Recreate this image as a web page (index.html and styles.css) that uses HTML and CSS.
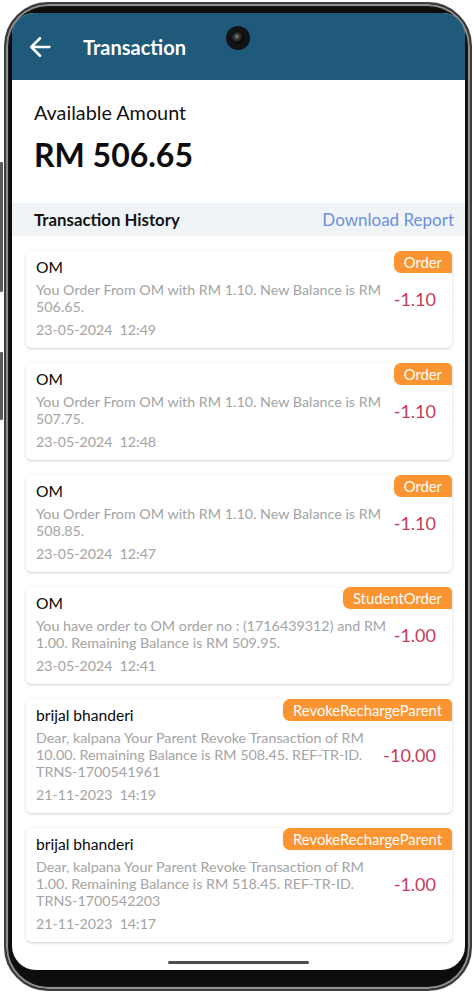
FILE: index.html
```html
<!DOCTYPE html>
<html lang="en">
<head>
<meta charset="utf-8">
<title>Transaction</title>
<link rel="stylesheet" href="styles.css">
</head>
<body>
<div class="device">
  <span class="side-btn side-btn-1"></span>
  <span class="side-btn side-btn-2"></span>
  <div class="screen">
    <header class="appbar">
      <svg class="back" viewBox="0 0 24 24" width="30" height="30" aria-hidden="true">
        <path d="M19.5 12H5.2M12 5l-7 7 7 7" fill="none" stroke="#fff" stroke-width="2" stroke-linecap="round" stroke-linejoin="round"/>
      </svg>
      <h1 class="title">Transaction</h1>
      <span class="camera"><span class="lens"></span></span>
    </header>
    <main class="content">
      <section class="balance">
        <div class="balance-label">Available Amount</div>
        <div class="balance-value">RM 506.65</div>
      </section>
      <div class="band">
        <span class="band-title">Transaction History</span>
        <span class="band-link">Download Report</span>
      </div>
      <div class="list">
        <article class="card">
          <span class="badge">Order</span>
          <div class="card-body">
            <div class="card-main">
              <div class="name">OM</div>
              <div class="desc">You Order From OM with RM 1.10. New Balance is RM 506.65.</div>
              <div class="date">23-05-2024&nbsp; 12:49</div>
            </div>
            <div class="amount">-1.10</div>
          </div>
        </article>
        <article class="card">
          <span class="badge">Order</span>
          <div class="card-body">
            <div class="card-main">
              <div class="name">OM</div>
              <div class="desc">You Order From OM with RM 1.10. New Balance is RM 507.75.</div>
              <div class="date">23-05-2024&nbsp; 12:48</div>
            </div>
            <div class="amount">-1.10</div>
          </div>
        </article>
        <article class="card">
          <span class="badge">Order</span>
          <div class="card-body">
            <div class="card-main">
              <div class="name">OM</div>
              <div class="desc">You Order From OM with RM 1.10. New Balance is RM 508.85.</div>
              <div class="date">23-05-2024&nbsp; 12:47</div>
            </div>
            <div class="amount">-1.10</div>
          </div>
        </article>
        <article class="card">
          <span class="badge">StudentOrder</span>
          <div class="card-body">
            <div class="card-main">
              <div class="name">OM</div>
              <div class="desc">You have order to OM order no : (1716439312) and RM 1.00. Remaining Balance is RM 509.95.</div>
              <div class="date">23-05-2024&nbsp; 12:41</div>
            </div>
            <div class="amount">-1.00</div>
          </div>
        </article>
        <article class="card">
          <span class="badge">RevokeRechargeParent</span>
          <div class="card-body">
            <div class="card-main">
              <div class="name">brijal bhanderi</div>
              <div class="desc">Dear, kalpana Your Parent Revoke Transaction of RM 10.00. Remaining Balance is RM 508.45. REF-TR-ID. TRNS-1700541961</div>
              <div class="date">21-11-2023&nbsp; 14:19</div>
            </div>
            <div class="amount">-10.00</div>
          </div>
        </article>
        <article class="card">
          <span class="badge">RevokeRechargeParent</span>
          <div class="card-body">
            <div class="card-main">
              <div class="name">brijal bhanderi</div>
              <div class="desc">Dear, kalpana Your Parent Revoke Transaction of RM 1.00. Remaining Balance is RM 518.45. REF-TR-ID. TRNS-1700542203</div>
              <div class="date">21-11-2023&nbsp; 14:17</div>
            </div>
            <div class="amount">-1.00</div>
          </div>
        </article>
      </div>
    </main>
    <div class="home-indicator"></div>
  </div>
</div>
</body>
</html>
```
FILE: styles.css
```css
* { box-sizing: border-box; }

html, body {
  margin: 0;
  padding: 0;
  background: #ffffff;
  font-family: Lato, "Open Sans", "Liberation Sans", sans-serif;
}

body {
  width: 474px;
  height: 993px;
  overflow: hidden;
}

.device {
  position: relative;
  margin: 2px 0 0 4px;
  width: 468px;
  height: 989px;
  border: 2px solid #3c3c3c;
  border-radius: 44px;
  background: #0d0d0d;
  box-shadow: inset 0 0 0 2px #8e8e8e, inset 0 0 0 3px #1a1a1a;
  padding: 9px 5px 19px 6px;
}

.side-btn {
  position: absolute;
  left: -6px;
  width: 3px;
  background: #5a5a5a;
  border-radius: 1px;
}
.side-btn-1 { top: 158px; height: 130px; }
.side-btn-2 { top: 348px; height: 68px; }

.screen {
  position: relative;
  height: 100%;
  background: #ffffff;
  border-radius: 22px 22px 24px 24px;
  overflow: hidden;
  display: flex;
  flex-direction: column;
}

.appbar {
  position: relative;
  flex: 0 0 67px;
  background: #1f5a7b;
  display: flex;
  align-items: center;
  padding-left: 13px;
}

.back { display: block; flex: 0 0 auto; }

.title {
  margin: 0 0 0 28px;
  color: #ffffff;
  font-size: 20px;
  font-weight: 700;
  line-height: 24px;
}

.camera {
  position: absolute;
  left: 214px;
  top: 13px;
  width: 24px;
  height: 24px;
  border-radius: 50%;
  background: #121314;
  display: flex;
  align-items: center;
  justify-content: center;
}
.lens {
  width: 12px;
  height: 12px;
  border-radius: 50%;
  background: radial-gradient(circle at 40% 38%, #8a8a8a 0, #3a3a3a 25%, #0a0a0a 60%);
}

.content {
  flex: 1 1 auto;
  overflow: hidden;
}

.balance {
  padding: 20px 22px 0 22px;
}
.balance-label {
  font-size: 19.8px;
  line-height: 24px;
  color: #111111;
}
.balance-value {
  margin-top: 12px;
  font-size: 32px;
  line-height: 38px;
  font-weight: 700;
  color: #0c0c0c;
}

.band {
  margin-top: 29px;
  height: 33px;
  background: #f1f4f7;
  display: flex;
  align-items: center;
  justify-content: space-between;
  padding: 0 11px 0 22px;
}
.band-title {
  font-size: 16.8px;
  font-weight: 700;
  color: #141414;
}
.band-link {
  font-size: 17px;
  color: #6c8fe2;
}

.list {
  padding: 15px 13px 0 14px;
  display: flex;
  flex-direction: column;
  gap: 15px;
}

.card {
  position: relative;
  background: #ffffff;
  border-radius: 5px;
  box-shadow: 0 1px 3px rgba(0, 0, 0, 0.18), 0 0 1px rgba(0, 0, 0, 0.08);
  padding: 7px 16px 9px 10px;
}

.badge {
  position: absolute;
  top: 0;
  right: 0;
  height: 22px;
  line-height: 22px;
  padding: 0 10px 0 10px;
  background: #fc9431;
  color: #ffffff;
  font-size: 14.8px;
  border-radius: 7px 5px 0 7px;
}

.card-body {
  display: flex;
  align-items: center;
  gap: 6px;
}

.card-main {
  flex: 1 1 auto;
  min-width: 0;
}

.name {
  font-size: 15.6px;
  line-height: 18px;
  color: #0a0a0a;
}

.desc {
  margin-top: 5px;
  font-size: 14.3px;
  line-height: 17px;
  color: #a4a4a4;
}

.date {
  margin-top: 6px;
  font-size: 14.2px;
  line-height: 18px;
  color: #a4a4a4;
}

.amount {
  flex: 0 0 auto;
  font-size: 18px;
  line-height: 22px;
  color: #c73a5d;
}

.home-indicator {
  position: absolute;
  left: 156px;
  bottom: 6px;
  width: 141px;
  height: 3px;
  border-radius: 2px;
  background: #4d4d4d;
}
```
